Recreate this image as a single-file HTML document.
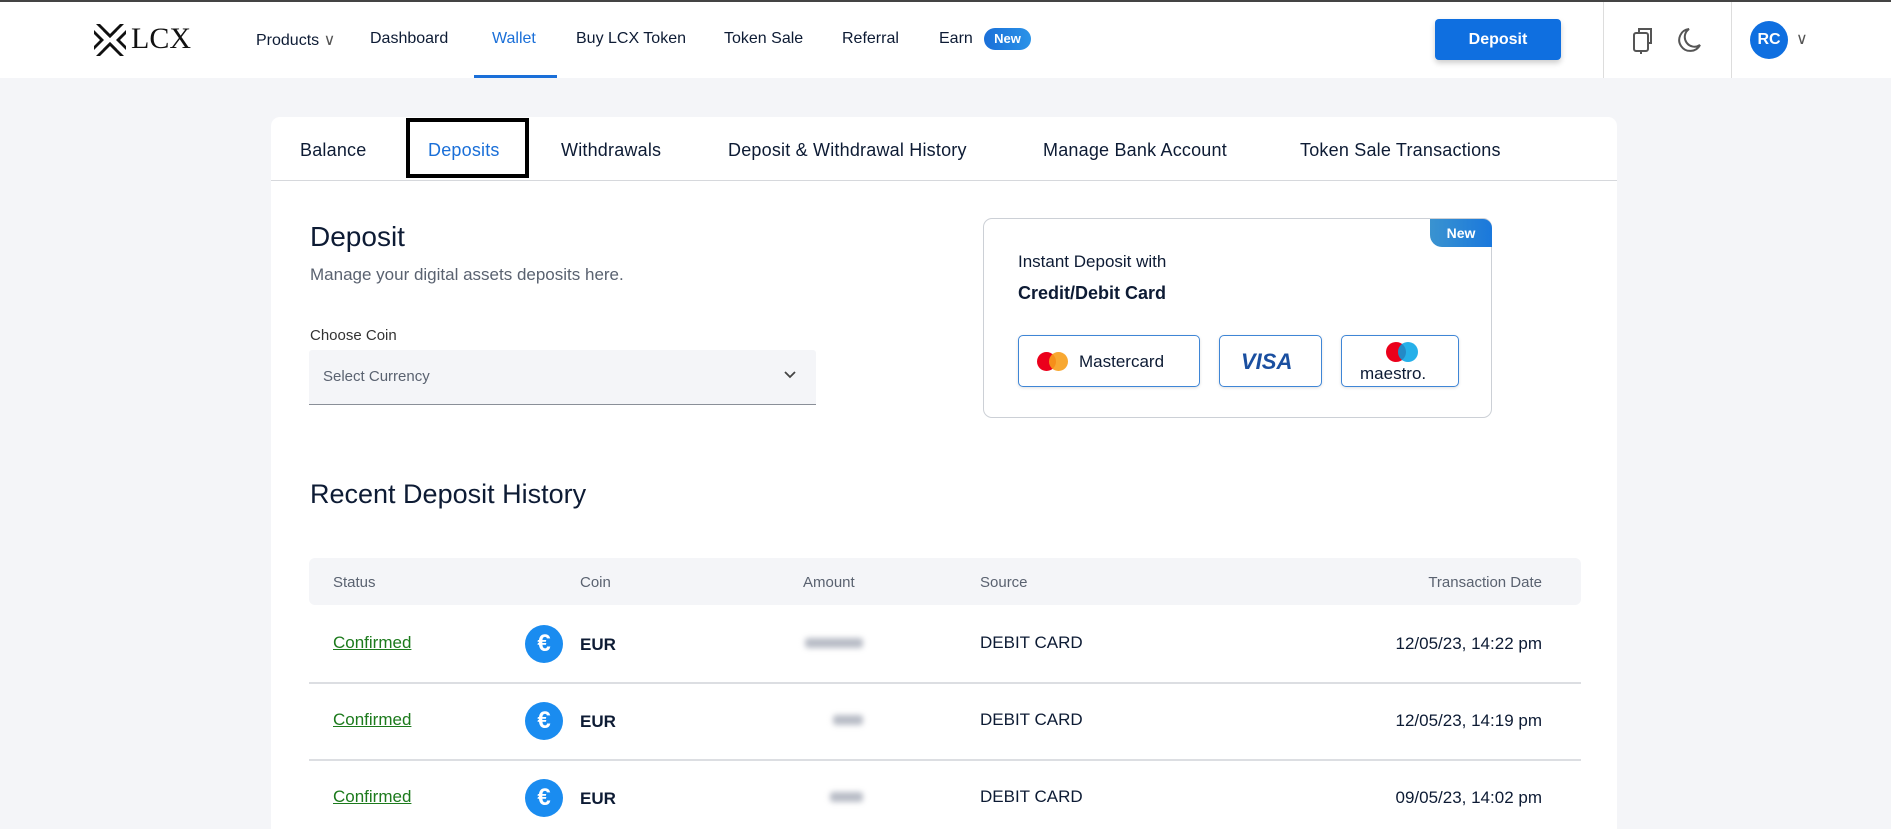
<!DOCTYPE html>
<html><head><meta charset="utf-8"><style>
*{box-sizing:border-box;margin:0;padding:0}
html{width:1891px;height:829px;overflow:hidden}
body{width:1891px;height:829px;overflow:hidden;background:#f4f5f8;font-family:"Liberation Sans",sans-serif;color:#0d1b34;position:relative}
.a{position:absolute;white-space:nowrap}
.hdr{position:absolute;left:0;top:0;width:1891px;height:78px;background:#fff;border-top:2px solid #444}
.nav{font-size:16px;top:30px}
.card{position:absolute;left:271px;top:117px;width:1346px;height:712px;background:#fff;border-radius:9px 9px 0 0}
.tab{font-size:18px;top:140px;letter-spacing:.2px}
.th{font-size:15px;color:#5a6270;top:574px}
.row{font-size:17px}
.conf{color:#1c7a1c;text-decoration:underline;font-size:17px}
.eu{width:38px;height:38px;border-radius:50%;background:#1a8cf0;color:#fff;font-weight:bold;font-size:24px;text-align:center;line-height:38px}
.blur{background:#b8bcc6;filter:blur(3px);height:10px;border-radius:3px}
.sep{position:absolute;left:309px;width:1272px;height:2px;background:#dcdee2}
.pb{position:absolute;top:335px;height:52px;border:1.5px solid #3f86d6;border-radius:5px;background:#fff;box-shadow:0 1px 3px rgba(0,0,0,.12)}
</style></head><body>
<div class="hdr"></div>
<svg class="a" style="left:92px;top:22px" width="36" height="36" viewBox="0 0 36 36"><g fill="#111"><path d="M4 2 L18 16 L32 2 L28 2 L18 12 L8 2Z"/><path d="M4 34 L18 20 L32 34 L28 34 L18 24 L8 34Z"/><path d="M2 8 L12 18 L2 28 L2 24 L8 18 L2 12Z"/><path d="M34 8 L24 18 L34 28 L34 24 L28 18 L34 12Z"/><path d="M11 9 L18 16 L25 9 L22 9 L18 13 L14 9Z"/><path d="M11 27 L18 20 L25 27 L22 27 L18 23 L14 27Z"/></g></svg>
<div class="a" style="left:131px;top:22px;font-family:'Liberation Serif',serif;font-size:30px;color:#111">LCX</div>
<div class="a nav" style="left:256px">Products <span style="color:#555">∨</span></div>
<div class="a nav" style="left:370px">Dashboard</div>
<div class="a nav" style="left:492px;color:#1a6fd8">Wallet</div>
<div class="a" style="left:474px;top:75px;width:83px;height:3px;background:#1a6fd8"></div>
<div class="a nav" style="left:576px">Buy LCX Token</div>
<div class="a nav" style="left:724px">Token Sale</div>
<div class="a nav" style="left:842px">Referral</div>
<div class="a nav" style="left:939px">Earn</div>
<div class="a" style="left:984px;top:28px;width:47px;height:22px;border-radius:11px;background:linear-gradient(90deg,#1a6fd8,#2b93e8);color:#fff;font-size:13px;font-weight:bold;text-align:center;line-height:22px">New</div>
<div class="a" style="left:1435px;top:19px;width:126px;height:41px;background:#0f6fe0;border-radius:4px;color:#fff;font-weight:bold;font-size:16px;text-align:center;line-height:41px;box-shadow:0 3px 6px rgba(0,0,0,.2)">Deposit</div>
<div class="a" style="left:1603px;top:2px;width:1px;height:76px;background:#ddd"></div>
<div class="a" style="left:1731px;top:2px;width:1px;height:76px;background:#ddd"></div>
<svg class="a" style="left:1632px;top:26px" width="26" height="30" viewBox="0 0 26 30" fill="none" stroke="#555" stroke-width="2"><rect x="2" y="7" width="14" height="18" rx="2"/><path d="M7 7V3h12v14h-3"/><path d="M9 25v3"/></svg>
<svg class="a" style="left:1677px;top:26px" width="26" height="30" viewBox="0 0 26 30" fill="none" stroke="#555" stroke-width="2"><path d="M12 3a11 11 0 1 0 11 16a9 9 0 0 1-11-16z"/></svg>
<div class="a" style="left:1750px;top:21px;width:38px;height:38px;border-radius:50%;background:#0f6fe0;color:#fff;font-weight:bold;font-size:16px;text-align:center;line-height:38px">RC</div>
<div class="a" style="left:1796px;top:29px;color:#555;font-size:16px">∨</div>

<div class="card"></div>
<div class="a tab" style="left:300px">Balance</div>
<div class="a tab" style="left:428px;color:#1a6fd8">Deposits</div>
<div class="a tab" style="left:561px">Withdrawals</div>
<div class="a tab" style="left:728px">Deposit &amp; Withdrawal History</div>
<div class="a tab" style="left:1043px">Manage Bank Account</div>
<div class="a tab" style="left:1300px">Token Sale Transactions</div>
<div class="a" style="left:271px;top:180px;width:1346px;height:1px;background:#d6d8dc"></div>
<div class="a" style="left:406px;top:118px;width:123px;height:60px;border:4px solid #000"></div>

<div class="a" style="left:310px;top:221px;font-size:28px">Deposit</div>
<div class="a" style="left:310px;top:265px;font-size:17px;color:#5a6270">Manage your digital assets deposits here.</div>
<div class="a" style="left:310px;top:327px;font-size:15px;color:#333">Choose Coin</div>
<div class="a" style="left:309px;top:350px;width:507px;height:55px;background:#f4f5f8;border-bottom:1.5px solid #8a8f98;border-radius:3px 3px 0 0"></div>
<div class="a" style="left:323px;top:368px;font-size:15px;color:#5a6270">Select Currency</div>
<svg class="a" style="left:783px;top:370px" width="14" height="10" viewBox="0 0 14 10" fill="none" stroke="#444" stroke-width="1.8"><path d="M2 2l5 5 5-5"/></svg>

<div class="a" style="left:983px;top:218px;width:509px;height:200px;border:1px solid #ccd0d6;border-radius:9px;background:#fff"></div>
<div class="a" style="left:1430px;top:219px;width:62px;height:28px;background:linear-gradient(90deg,#3a93d0,#1a78dc);border-radius:0 9px 0 12px;color:#fff;font-weight:bold;font-size:14px;text-align:center;line-height:28px">New</div>
<div class="a" style="left:1018px;top:252px;font-size:17px">Instant Deposit with</div>
<div class="a" style="left:1018px;top:283px;font-size:18px;font-weight:bold">Credit/Debit Card</div>
<div class="pb" style="left:1018px;width:182px"></div>
<div class="a" style="left:1037px;top:352px;width:19px;height:19px;border-radius:50%;background:#eb001b"></div>
<div class="a" style="left:1049px;top:352px;width:19px;height:19px;border-radius:50%;background:#f79e1b;opacity:.9"></div>
<div class="a" style="left:1079px;top:352px;font-size:17px">Mastercard</div>
<div class="pb" style="left:1219px;width:103px"></div>
<div class="a" style="left:1241px;top:349px;font-size:22px;font-weight:bold;font-style:italic;color:#1a4fa0">VISA</div>
<div class="pb" style="left:1341px;width:118px"></div>
<div class="a" style="left:1386px;top:342px;width:20px;height:20px;border-radius:50%;background:#eb001b"></div>
<div class="a" style="left:1398px;top:342px;width:20px;height:20px;border-radius:50%;background:#00a2e5;opacity:.85"></div>
<div class="a" style="left:1360px;top:364px;font-size:17px">maestro.</div>

<div class="a" style="left:310px;top:479px;font-size:27px">Recent Deposit History</div>
<div class="a" style="left:309px;top:558px;width:1272px;height:47px;background:#f4f5f8;border-radius:6px"></div>
<div class="a th" style="left:333px">Status</div>
<div class="a th" style="left:580px">Coin</div>
<div class="a th" style="left:803px">Amount</div>
<div class="a th" style="left:980px">Source</div>
<div class="a th" style="left:1412px;width:130px;text-align:right">Transaction Date</div>

<div class="a conf" style="left:333px;top:633px">Confirmed</div>
<div class="a eu" style="left:525px;top:625px">€</div>
<div class="a row" style="left:580px;top:635px;font-weight:bold">EUR</div>
<div class="a blur" style="left:805px;top:638px;width:58px"></div>
<div class="a row" style="left:980px;top:633px">DEBIT CARD</div>
<div class="a row" style="left:1342px;top:634px;width:200px;text-align:right">12/05/23, 14:22 pm</div>
<div class="sep" style="top:682px"></div>

<div class="a conf" style="left:333px;top:710px">Confirmed</div>
<div class="a eu" style="left:525px;top:702px">€</div>
<div class="a row" style="left:580px;top:712px;font-weight:bold">EUR</div>
<div class="a blur" style="left:833px;top:715px;width:30px"></div>
<div class="a row" style="left:980px;top:710px">DEBIT CARD</div>
<div class="a row" style="left:1342px;top:711px;width:200px;text-align:right">12/05/23, 14:19 pm</div>
<div class="sep" style="top:759px"></div>

<div class="a conf" style="left:333px;top:787px">Confirmed</div>
<div class="a eu" style="left:525px;top:779px">€</div>
<div class="a row" style="left:580px;top:789px;font-weight:bold">EUR</div>
<div class="a blur" style="left:830px;top:792px;width:33px"></div>
<div class="a row" style="left:980px;top:787px">DEBIT CARD</div>
<div class="a row" style="left:1342px;top:788px;width:200px;text-align:right">09/05/23, 14:02 pm</div>
</body></html>
